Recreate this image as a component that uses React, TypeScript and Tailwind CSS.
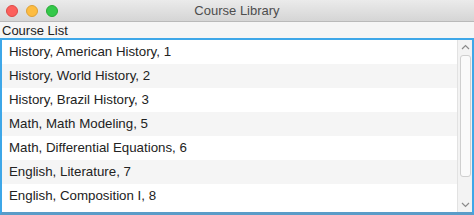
import React from "react"

const courses = [
    "History, American History, 1",
    "History, World History, 2",
    "History, Brazil History, 3",
    "Math, Math Modeling, 5",
    "Math, Differential Equations, 6",
    "English, Literature, 7",
    "English, Composition I, 8",
]

const font = { fontFamily: '"Liberation Sans", Arial, sans-serif' }

export default function App() {
    return (
        <div className="w-[474px] h-[215px] bg-[#ececec] flex flex-col overflow-hidden text-[#222]" style={font}>
            {/* title bar */}
            <div className="relative h-[22px] shrink-0 flex items-center justify-center bg-gradient-to-b from-[#ebebeb] to-[#d5d5d5] border-b border-[#b9b9b9]">
                <div className="absolute left-[6px] top-[5px] flex gap-[8px]">
                    <span className="w-[12px] h-[12px] rounded-full bg-[#fc605c] border border-[#de4a46]" />
                    <span className="w-[12px] h-[12px] rounded-full bg-[#fdbc40] border border-[#dea236]" />
                    <span className="w-[12px] h-[12px] rounded-full bg-[#34c84a] border border-[#27aa35]" />
                </div>
                <span className="text-[13px] text-[#4d4d4d]">Course Library</span>
            </div>
            {/* label */}
            <div className="h-[16px] shrink-0 px-[2px] flex items-center text-[13px] leading-none bg-[#f5f5f5]">Course List</div>
            {/* list */}
            <div className="flex-1 flex border-2 border-[#3ea7e8] border-b-[3px] border-b-[#5a9cc8] bg-white min-h-0">
                <div className="flex-1 flex flex-col">
                    {courses.map((c, i) => (
                        <div key={c} className={`h-[24px] shrink-0 flex items-center pl-[7px] text-[13.3px] ${i % 2 === 1 ? "bg-[#f5f5f5]" : "bg-white"}`}>
                            {c}
                        </div>
                    ))}
                </div>
                <div className="w-[15px] flex flex-col items-center bg-[#f3f3f3] border-l border-[#e2e2e2]">
                    <svg width="9" height="6" viewBox="0 0 9 6" className="mt-[4px]">
                        <path d="M1 5 L4.5 1.5 L8 5" fill="none" stroke="#8a8a8a" strokeWidth="1.2" />
                    </svg>
                    <div className="mt-[5px] w-[11px] h-[122px] rounded-[3px] bg-[#fafafa] border border-[#cfcfcf]" />
                    <div className="flex-1" />
                    <svg width="9" height="6" viewBox="0 0 9 6" className="mb-[4px]">
                        <path d="M1 1 L4.5 4.5 L8 1" fill="none" stroke="#8a8a8a" strokeWidth="1.2" />
                    </svg>
                </div>
            </div>
        </div>
    )
}
